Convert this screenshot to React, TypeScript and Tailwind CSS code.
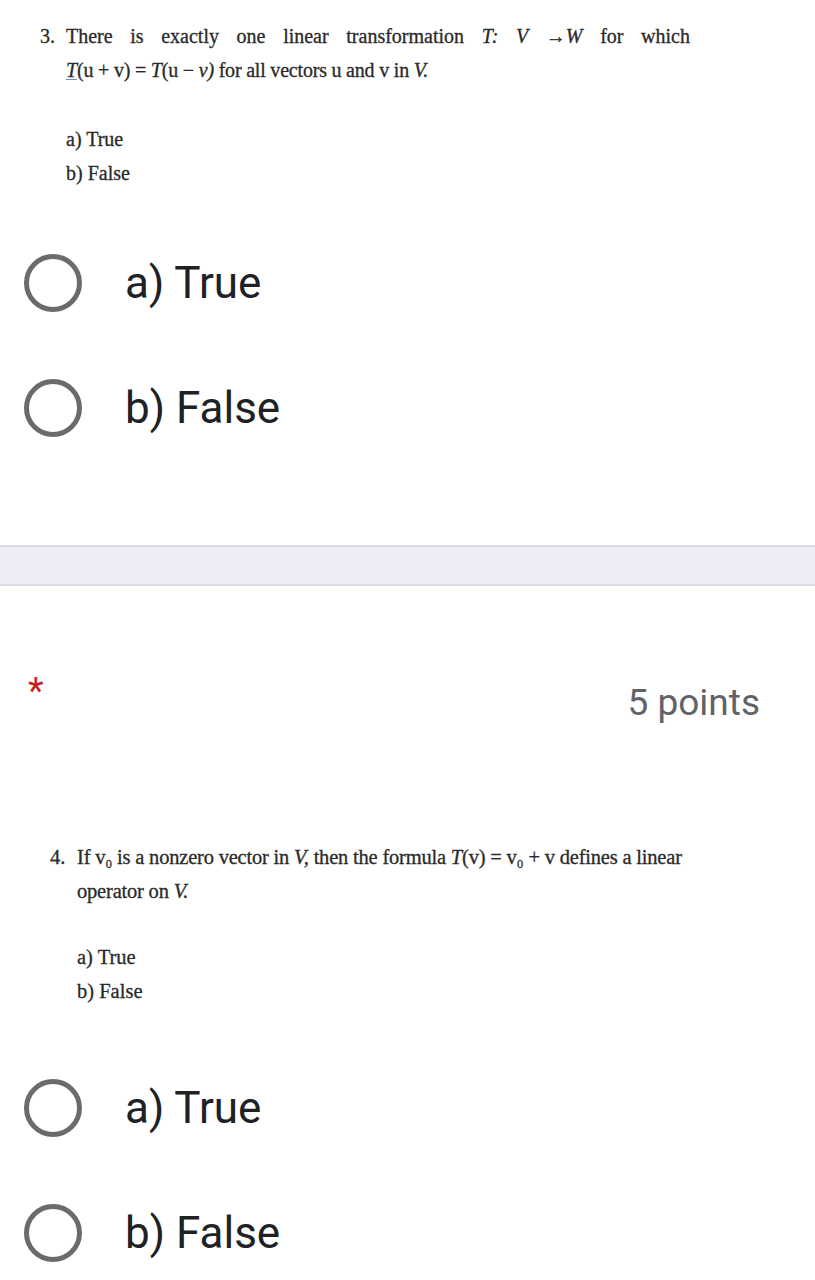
import React from 'react';

const serif = "font-['Liberation_Serif',serif]";
const sans = "font-['Roboto','Liberation_Sans',sans-serif]";

type RadioProps = { label: string };

const RadioOption: React.FC<RadioProps> = ({ label }) => (
  <div className="flex h-[125px] items-center">
    <div className="ml-[24px] h-[58px] w-[58px] shrink-0 rounded-full border-[5px] border-[#6b6b6b]" />
    <span className={`${sans} ml-[43px] text-[44px] leading-none text-[#202124]`}>{label}</span>
  </div>
);

const App: React.FC = () => {
  return (
    <div className="min-h-[1280px] w-[815px] overflow-hidden bg-white">
      {/* question 3 image */}
      <div className={`${serif} pt-[19px] text-[20px] leading-[34px] text-[#2a2a2a] [-webkit-text-stroke:0.3px]`}>
        <div className="flex pl-[40px]">
          <span className="w-[26px] shrink-0">3.</span>
          <div className="w-[624px]">
            <div className="text-justify [text-align-last:justify]">
              There is exactly one linear transformation <i>T:</i> <i>V</i> →<i>W</i> for which
            </div>
            <div className="tracking-[-0.2px]">
              <i className="underline decoration-[#7a86c8] decoration-1 underline-offset-2">T</i>(u + v) = <i>T</i>(u − <i>v)</i> for all vectors u and v in <i>V.</i>
            </div>
          </div>
        </div>
        <div className="mt-[35px] pl-[66px]">
          <div>a) True</div>
          <div>b) False</div>
        </div>
      </div>

      <div className="mt-[30px]">
        <RadioOption label="a) True" />
        <RadioOption label="b) False" />
      </div>

      {/* section divider */}
      <div className="mt-[75px] h-[41px] border-y-2 border-[#dcdae3] bg-[#efebf7]" />

      {/* question 4 header */}
      <div className="flex items-start justify-between pl-[28px] pr-[55px] pt-[87px]">
        <span className={`${sans} text-[36px] leading-none text-[#c5221f]`}>*</span>
        <span className={`${sans} mt-[11px] text-[37px] leading-none text-[#5f6368]`}>5 points</span>
      </div>

      {/* question 4 image */}
      <div className={`${serif} mt-[119px] text-[20.5px] leading-[34px] text-[#2a2a2a] [-webkit-text-stroke:0.3px]`}>
        <div className="flex pl-[50px]">
          <span className="w-[27px] shrink-0">4.</span>
          <div className="tracking-[-0.2px]">
            <div>
              If v₀ is a nonzero vector in <i>V,</i> then the formula <i>T</i>(v) = v₀ + v defines a linear
            </div>
            <div>
              operator on <i>V.</i>
            </div>
          </div>
        </div>
        <div className="mt-[32px] pl-[77px]">
          <div>a) True</div>
          <div>b) False</div>
        </div>
      </div>

      <div className="mt-[37px]">
        <RadioOption label="a) True" />
        <RadioOption label="b) False" />
      </div>
    </div>
  );
};

export default App;
